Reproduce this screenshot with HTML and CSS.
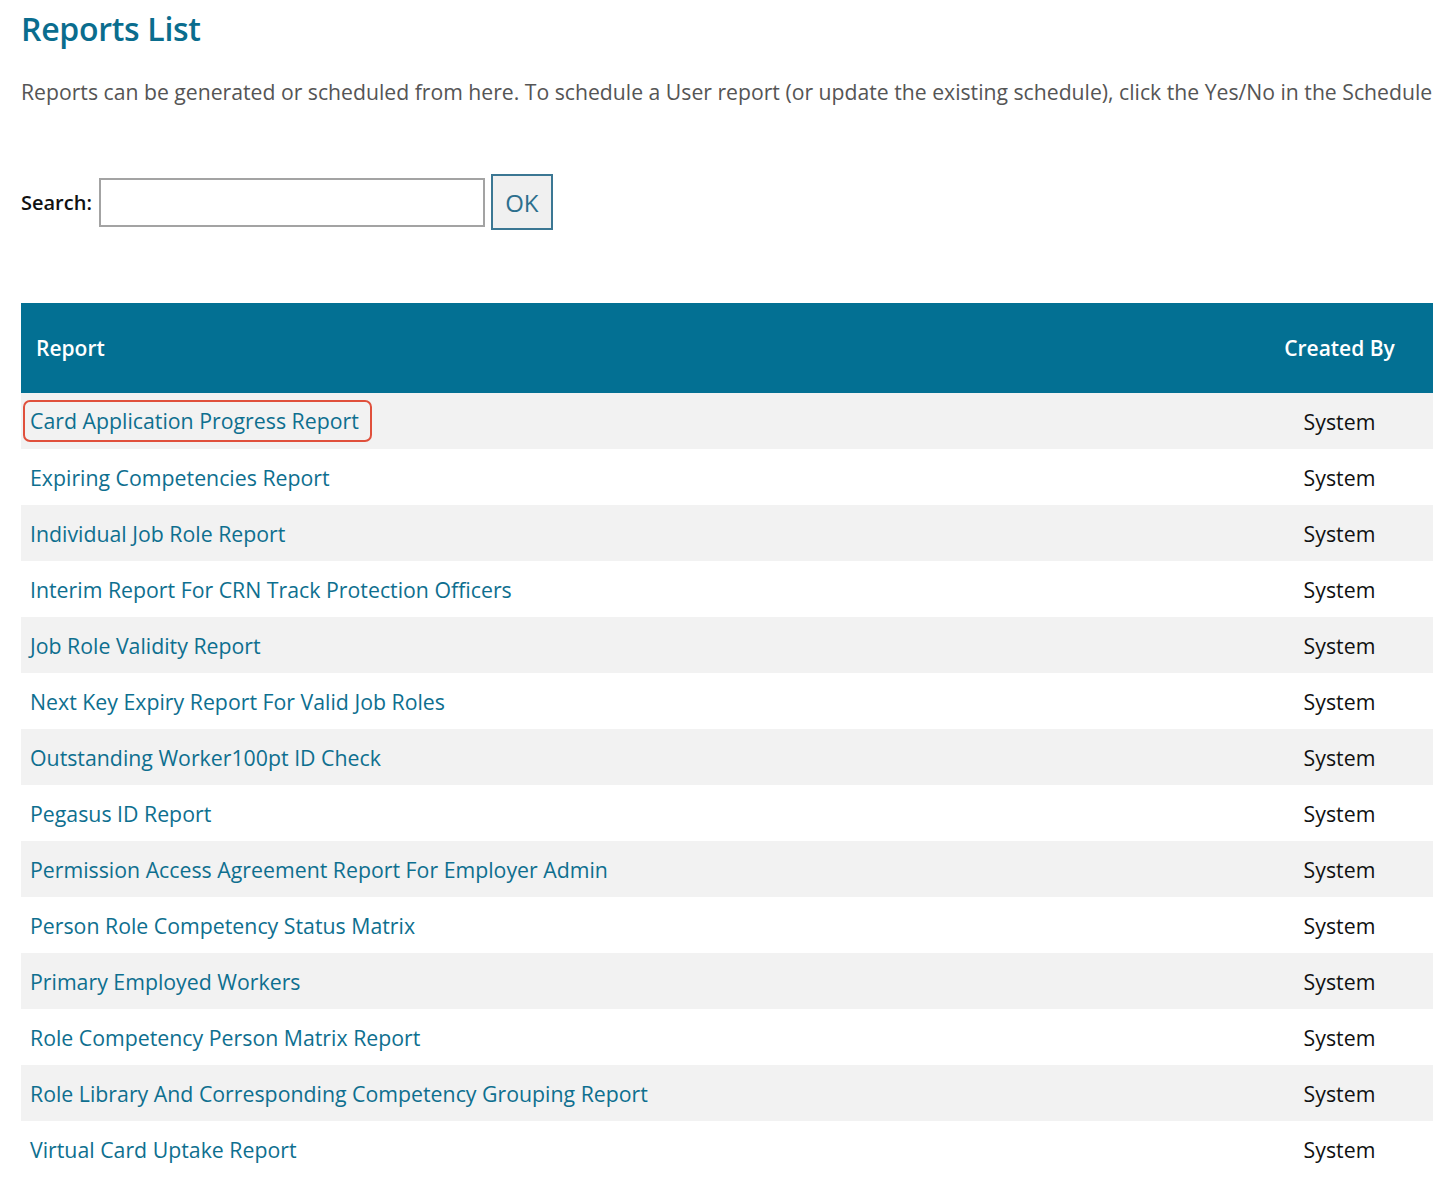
FILE: index.html
```html
<!DOCTYPE html>
<html>
<head>
<meta charset="utf-8">
<link rel="stylesheet" href="styles.css">
<title>Reports List</title>
</head>
<body>
<div class="page">
  <h1 class="title">Reports List</h1>
  <p class="intro">Reports can be generated or scheduled from here. To schedule a User report (or update the existing schedule), click the Yes/No in the Schedule column.</p>
  <form class="search">
    <label class="search-label" for="q">Search:</label>
    <input class="search-input" id="q" type="text">
    <button class="search-btn" type="button">OK</button>
  </form>
  <table class="reports">
    <thead>
      <tr><th class="col-report">Report</th><th class="col-by">Created By</th></tr>
    </thead>
    <tbody>
      <tr><td class="col-report"><a class="link link-highlight" href="#">Card Application Progress Report</a></td><td class="col-by">System</td></tr>
      <tr><td class="col-report"><a class="link" href="#">Expiring Competencies Report</a></td><td class="col-by">System</td></tr>
      <tr><td class="col-report"><a class="link" href="#">Individual Job Role Report</a></td><td class="col-by">System</td></tr>
      <tr><td class="col-report"><a class="link" href="#">Interim Report For CRN Track Protection Officers</a></td><td class="col-by">System</td></tr>
      <tr><td class="col-report"><a class="link" href="#">Job Role Validity Report</a></td><td class="col-by">System</td></tr>
      <tr><td class="col-report"><a class="link" href="#">Next Key Expiry Report For Valid Job Roles</a></td><td class="col-by">System</td></tr>
      <tr><td class="col-report"><a class="link" href="#">Outstanding Worker100pt ID Check</a></td><td class="col-by">System</td></tr>
      <tr><td class="col-report"><a class="link" href="#">Pegasus ID Report</a></td><td class="col-by">System</td></tr>
      <tr><td class="col-report"><a class="link" href="#">Permission Access Agreement Report For Employer Admin</a></td><td class="col-by">System</td></tr>
      <tr><td class="col-report"><a class="link" href="#">Person Role Competency Status Matrix</a></td><td class="col-by">System</td></tr>
      <tr><td class="col-report"><a class="link" href="#">Primary Employed Workers</a></td><td class="col-by">System</td></tr>
      <tr><td class="col-report"><a class="link" href="#">Role Competency Person Matrix Report</a></td><td class="col-by">System</td></tr>
      <tr><td class="col-report"><a class="link" href="#">Role Library And Corresponding Competency Grouping Report</a></td><td class="col-by">System</td></tr>
      <tr><td class="col-report"><a class="link" href="#">Virtual Card Uptake Report</a></td><td class="col-by">System</td></tr>
    </tbody>
  </table>
</div>
</body>
</html>
```
FILE: styles.css
```css
html, body {
  margin: 0;
  padding: 0;
  overflow: hidden;
  background: #fff;
}
body {
  font-family: "Open Sans", "Noto Sans", "Liberation Sans", sans-serif;
  color: #222;
}
.page {
  padding: 0 0 0 21px;
  width: 1480px;
}
.title {
  margin: 8px 0 0 0;
  font-size: 32px;
  line-height: 42px;
  font-weight: 600;
  color: #0a6d8e;
  letter-spacing: -0.3px;
}
.intro {
  margin: 28px 0 0 0;
  font-size: 21.2px;
  line-height: 28px;
  color: #555;
  white-space: nowrap;
}
.search {
  display: flex;
  align-items: center;
  margin-top: 68px;
  height: 56px;
}
.search-label {
  font-size: 20px;
  font-weight: 600;
  color: #111;
  margin-right: 7px;
}
.search-input {
  box-sizing: border-box;
  width: 386px;
  height: 49px;
  border: 2px solid #a3a3a3;
  border-radius: 0;
  margin: 0 6px 0 0;
  padding: 0 6px;
  font: inherit;
}
.search-btn {
  box-sizing: border-box;
  width: 62px;
  height: 56px;
  border: 2px solid #3b7793;
  background: #f0f0f0;
  color: #2c6f8d;
  font-family: inherit;
  font-size: 24px;
  padding: 0;
}
.reports {
  margin-top: 73px;
  width: 1450px;
  border-collapse: collapse;
  font-size: 21.3px;
}
.reports th {
  background: #037093;
  color: #fff;
  font-weight: 600;
  height: 90px;
  padding: 0 15px;
  font-size: 21px;
}
.reports th.col-report {
  text-align: left;
}
.reports td {
  height: 56px;
  padding: 0 9px;
}
.reports tbody tr:nth-child(odd) {
  background: #f2f2f2;
}
.reports .col-by {
  width: 141px;
  text-align: center;
  padding: 0 61px 0 9px;
}
td.col-by {
  color: #111;
}
.link {
  color: #0e6f8f;
  text-decoration: none;
}
.link-highlight {
  display: inline-block;
  border: 2px solid #e0503c;
  border-radius: 7px;
  padding: 4px 11px 5px 5px;
  margin-left: -7px;
}
```
